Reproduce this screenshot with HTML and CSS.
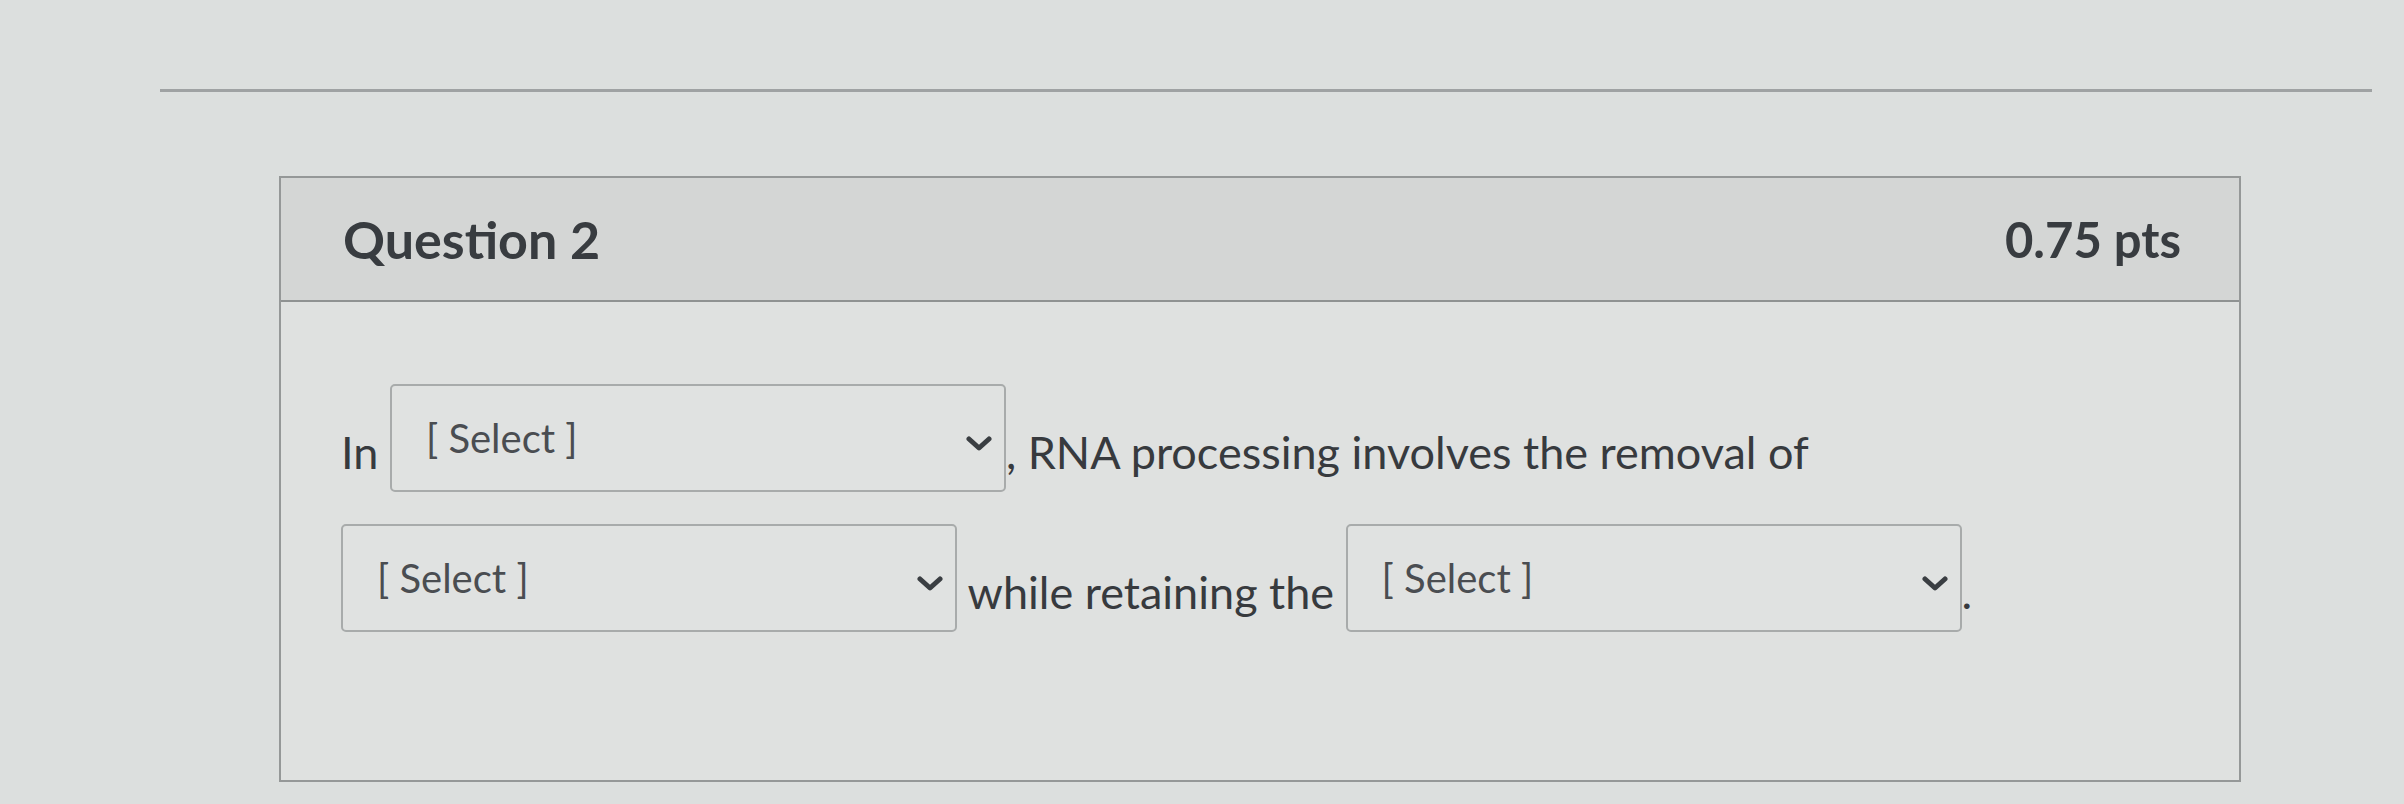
FILE: index.html
```html
<!DOCTYPE html>
<html lang="en">
<head>
<meta charset="utf-8">
<title>Question 2</title>
<link rel="stylesheet" href="styles.css">
</head>
<body>
<div class="page">
  <hr class="rule">
  <div class="question">
    <div class="q-header">
      <h2 class="q-title">Question 2</h2>
      <div class="q-points">0.75 pts</div>
    </div>
    <div class="q-body">
      <p class="q-text">In <span class="dd"><select class="dd-select"><option>[ Select ]</option></select><svg class="dd-chevron" viewBox="0 0 26 15" width="26" height="15"><polyline points="3,3 13,12 23,3"/></svg></span>, RNA processing involves the removal of <span class="dd"><select class="dd-select"><option>[ Select ]</option></select><svg class="dd-chevron" viewBox="0 0 26 15" width="26" height="15"><polyline points="3,3 13,12 23,3"/></svg></span> while retaining the <span class="dd"><select class="dd-select"><option>[ Select ]</option></select><svg class="dd-chevron" viewBox="0 0 26 15" width="26" height="15"><polyline points="3,3 13,12 23,3"/></svg></span>.</p>
    </div>
  </div>
</div>
</body>
</html>
```
FILE: styles.css
```css
html, body {
  margin: 0;
  padding: 0;
  background: #dcdfde;
}

body {
  font-family: Lato, "Open Sans", "Liberation Sans", sans-serif;
  color: #3e4246;
}

.page {
  width: 2404px;
  height: 804px;
  padding-top: 89px;
  box-sizing: border-box;
  overflow: hidden;
}

.rule {
  margin: 0 0 0 160px;
  width: 2212px;
  height: 0;
  border: 0;
  border-top: 3px solid #9fa2a3;
}

.question {
  margin: 84px 0 0 279px;
  width: 1962px;
  box-sizing: border-box;
  border: 2px solid #959898;
  background: #dfe1e0;
}

.q-header {
  height: 124px;
  box-sizing: border-box;
  padding: 0 58px 0 62px;
  display: flex;
  align-items: center;
  justify-content: space-between;
  background: #d4d6d5;
  border-bottom: 2px solid #8f9292;
}

.q-title {
  margin: 0;
  font-size: 52px;
  font-weight: 700;
  line-height: 1;
  color: #383c40;
}

.q-points {
  font-size: 49px;
  font-weight: 700;
  line-height: 1;
  color: #383c40;
}

.q-body {
  padding: 66px 60px 132px 60px;
}

.q-text {
  margin: 0;
  font-size: 45px;
  line-height: 1.2;
  color: #373a3e;
}

.dd {
  display: inline-block;
  position: relative;
  vertical-align: 16px;
  margin: 16px 0;
}

.dd-select {
  display: block;
  width: 616px;
  height: 108px;
  box-sizing: border-box;
  margin: 0;
  padding: 0 60px 0 34px;
  -webkit-appearance: none;
  appearance: none;
  border: 2px solid #a8abab;
  border-radius: 5px;
  background: #e0e2e1;
  font-family: Lato, "Open Sans", "Liberation Sans", sans-serif;
  font-size: 40px;
  color: #4a4d51;
}

.dd-chevron {
  position: absolute;
  right: 14px;
  top: calc(50% - 2px);
  fill: none;
  stroke: #3a3e42;
  stroke-width: 5;
  stroke-linecap: round;
  stroke-linejoin: round;
}
```
